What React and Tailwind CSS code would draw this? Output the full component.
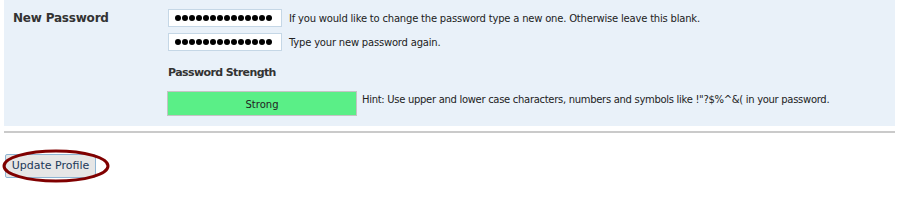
function PwBox() {
  return (
    <div className="w-[114px] h-[18px] bg-white border border-[#c5d7e6] pl-[6px] flex items-center gap-[1px] shrink-0">
      {Array.from({ length: 14 }).map((_, i) => (
        <span key={i} className="w-[6px] h-[6px] rounded-full bg-black" />
      ))}
    </div>
  );
}

export default function App() {
  const font = { fontFamily: '"DejaVu Sans", Verdana, sans-serif' };
  return (
    <div className="w-[897px] h-[221px] bg-white text-[#222]" style={font}>
      <div className="ml-[4px] w-[891px] h-[126px] bg-[#e9f1f9] flex">
        <div className="w-[164px] pl-[9px] pt-[9px] text-[12px] font-bold text-[#333] tracking-[-0.2px]">
          New Password
        </div>
        <div className="flex flex-col pt-[9px]">
          <div className="flex items-center gap-[7px]">
            <PwBox />
            <span className="text-[10px] tracking-[-0.2px]">If you would like to change the password type a new one. Otherwise leave this blank.</span>
          </div>
          <div className="flex items-center gap-[7px] mt-[6px]">
            <PwBox />
            <span className="text-[10px] tracking-[-0.2px]">Type your new password again.</span>
          </div>
          <div className="mt-[15px] text-[11px] font-bold text-[#333] leading-[14px] tracking-[-0.6px]">Password Strength</div>
          <div className="flex items-start gap-[5px] mt-[11px] -ml-[1px]">
            <div className="w-[190px] h-[25px] bg-[#5aef87] border border-[#c4c4c4] flex items-center justify-center text-[10px] pt-[1px] shrink-0">
              Strong
            </div>
            <span className="text-[10px] mt-[1px] tracking-[-0.3px]">Hint: Use upper and lower case characters, numbers and symbols like !"?$%^&amp;( in your password.</span>
          </div>
        </div>
      </div>
      <div className="ml-[4px] w-[891px] mt-[5px] h-[2px] bg-[#cacaca]" />
      <div className="relative ml-[5px] mt-[19px] w-fit">
        <button className="w-[91px] h-[24px] bg-[#e6e6e6] border border-[#8fb6d4] rounded-[2px] text-[11px] text-[#1c3857]" style={font}>
          Update Profile
        </button>
        <svg className="absolute -left-[3px] -top-[3px] pointer-events-none" width="108" height="34" viewBox="0 0 108 34">
          <ellipse cx="54" cy="17" rx="52" ry="15" fill="none" stroke="#800000" strokeWidth="3" />
        </svg>
      </div>
    </div>
  );
}
